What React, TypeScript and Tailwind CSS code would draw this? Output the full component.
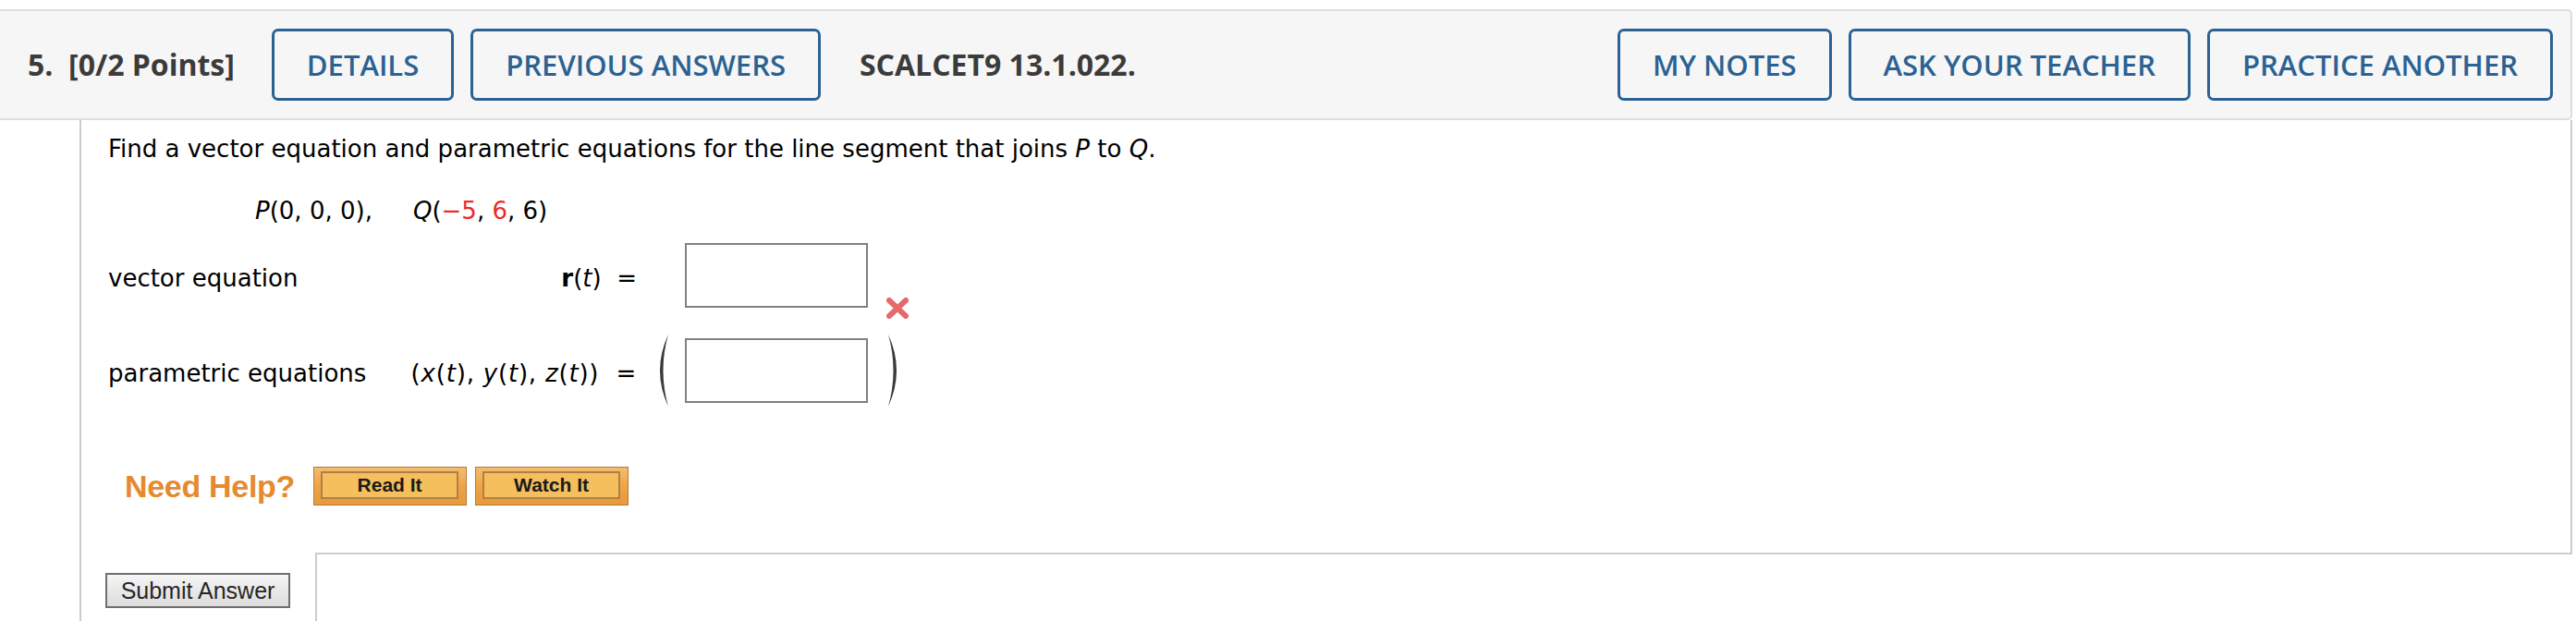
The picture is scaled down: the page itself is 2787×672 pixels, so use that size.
import React from "react";

const headerFont = { fontFamily: '"Open Sans", "Liberation Sans", sans-serif' };
const qFont = { fontFamily: '"DejaVu Sans", Verdana, sans-serif' };
const arial = { fontFamily: '"Liberation Sans", Arial, sans-serif' };

function HeaderButton({ label }: { label: string }) {
  return (
    <button className="h-[78px] px-[35px] border-[3px] border-[#2b6293] rounded-[7px] text-[31px] font-semibold text-[#2b6293] bg-transparent leading-none">
      {label}
    </button>
  );
}

function Paren({ right }: { right?: boolean }) {
  return (
    <svg width="16" height="78" viewBox="0 0 16 78" className={"overflow-visible " + (right ? "-scale-x-100" : "")}>
      <path d="M15 0 Q-3 39 15 78 Q4 39 15 0 Z" fill="#3a3a3a" />
    </svg>
  );
}

function AnswerBox() {
  return <div className="w-[198px] h-[70px] border-2 border-[#808080] bg-white" />;
}

function WrongMark() {
  return (
    <svg width="28" height="25" viewBox="0 0 28 25">
      <g stroke="#e35a5a" strokeWidth="6" strokeLinecap="round" opacity="0.9">
        <line x1="5" y1="4" x2="23" y2="21" />
        <line x1="23" y1="4" x2="5" y2="21" />
      </g>
    </svg>
  );
}

function HelpButton({ label }: { label: string }) {
  return (
    <div className="w-[166px] h-[42px] border border-[#b27a3e] bg-gradient-to-b from-[#f6bc6c] via-[#eea445] to-[#e99a3a] pl-[7px] pr-[8px] pt-[4px] pb-[6px]">
      <div
        className="h-full border-2 border-[#ad8048] bg-[#f4bf5c] flex items-center justify-center text-[21px] font-bold text-[#1a1a1a]"
        style={arial}
      >
        {label}
      </div>
    </div>
  );
}

export default function App() {
  return (
    <div className="w-[2787px] h-[672px] bg-white overflow-hidden">
      {/* question header bar */}
      <div
        className="mt-[10px] mr-[4px] h-[120px] flex items-center bg-[#f6f6f6] border-y-2 border-r-2 border-[#dddddd] rounded-r-[5px] pl-[30px] pr-[19px]"
        style={headerFont}
      >
        <span className="text-[32px] font-bold text-[#3b3b3b] whitespace-pre">5.  [0/2 Points]</span>
        <div className="flex gap-[18px] ml-[40px]">
          <HeaderButton label="DETAILS" />
          <HeaderButton label="PREVIOUS ANSWERS" />
        </div>
        <span className="ml-[42px] text-[32px] font-bold text-[#3b3b3b]">SCALCET9 13.1.022.</span>
        <div className="flex gap-[18px] ml-auto">
          <HeaderButton label="MY NOTES" />
          <HeaderButton label="ASK YOUR TEACHER" />
          <HeaderButton label="PRACTICE ANOTHER" />
        </div>
      </div>

      <div className="ml-[86px] mr-[4px] border-l-2 border-[#cccccc]">
        {/* question body */}
        <div className="border-r-2 border-[#cccccc] pl-[29px] pt-[16px] pb-[51px] text-[26px] leading-[30px] text-black" style={qFont}>
          <p>
            Find a vector equation and parametric equations for the line segment that joins <i>P</i> to <i>Q</i>.
          </p>
          <p className="mt-[37px] ml-[159px]">
            <i>P</i>(0, 0, 0),<span className="inline-block w-[44px]" />
            <i>Q</i>(<span className="text-[#ee2a24]">−5</span>, <span className="text-[#ee2a24]">6</span>, 6)
          </p>

          <div className="mt-[20px] grid grid-cols-[303px_269px_52px_198px_80px] gap-y-[33px] items-center">
            <div className="pt-[6px]">vector equation</div>
            <div className="pt-[6px] text-right whitespace-pre">
              <b>r</b>(<i>t</i>)  =
            </div>
            <div />
            <div className="relative">
              <AnswerBox />
              <div className="absolute left-[216px] top-[58px]">
                <WrongMark />
              </div>
            </div>
            <div />

            <div className="pt-[6px]">parametric equations</div>
            <div className="pt-[6px] text-right whitespace-pre tracking-[0.8px]">
              (<i>x</i>(<i>t</i>), <i>y</i>(<i>t</i>), <i>z</i>(<i>t</i>))  =
            </div>
            <div className="h-[70px] flex items-center justify-end pr-[17px]">
              <Paren />
            </div>
            <AnswerBox />
            <div className="h-[70px] pl-[21px] flex items-center">
              <Paren right />
            </div>
          </div>

          <div className="mt-[69px] ml-[18px] flex items-center h-[42px]">
            <span className="text-[34px] font-bold text-[#e68a2e] tracking-[-0.3px]" style={arial}>
              Need Help?
            </span>
            <div className="ml-[20px] flex gap-[9px]">
              <HelpButton label="Read It" />
              <HelpButton label="Watch It" />
            </div>
          </div>
        </div>

        {/* submit row */}
        <div className="flex h-[80px]">
          <div className="w-[253px] pl-[26px] pt-[22px]">
            <button
              className="w-[200px] h-[38px] border-2 border-[#6e6e6e] bg-gradient-to-b from-[#f5f5f5] to-[#dcdcdc] text-[25px] text-[#262626] leading-none"
              style={arial}
            >
              Submit Answer
            </button>
          </div>
          <div className="flex-1 border-t-2 border-l-2 border-[#cccccc]" />
        </div>
      </div>
    </div>
  );
}
